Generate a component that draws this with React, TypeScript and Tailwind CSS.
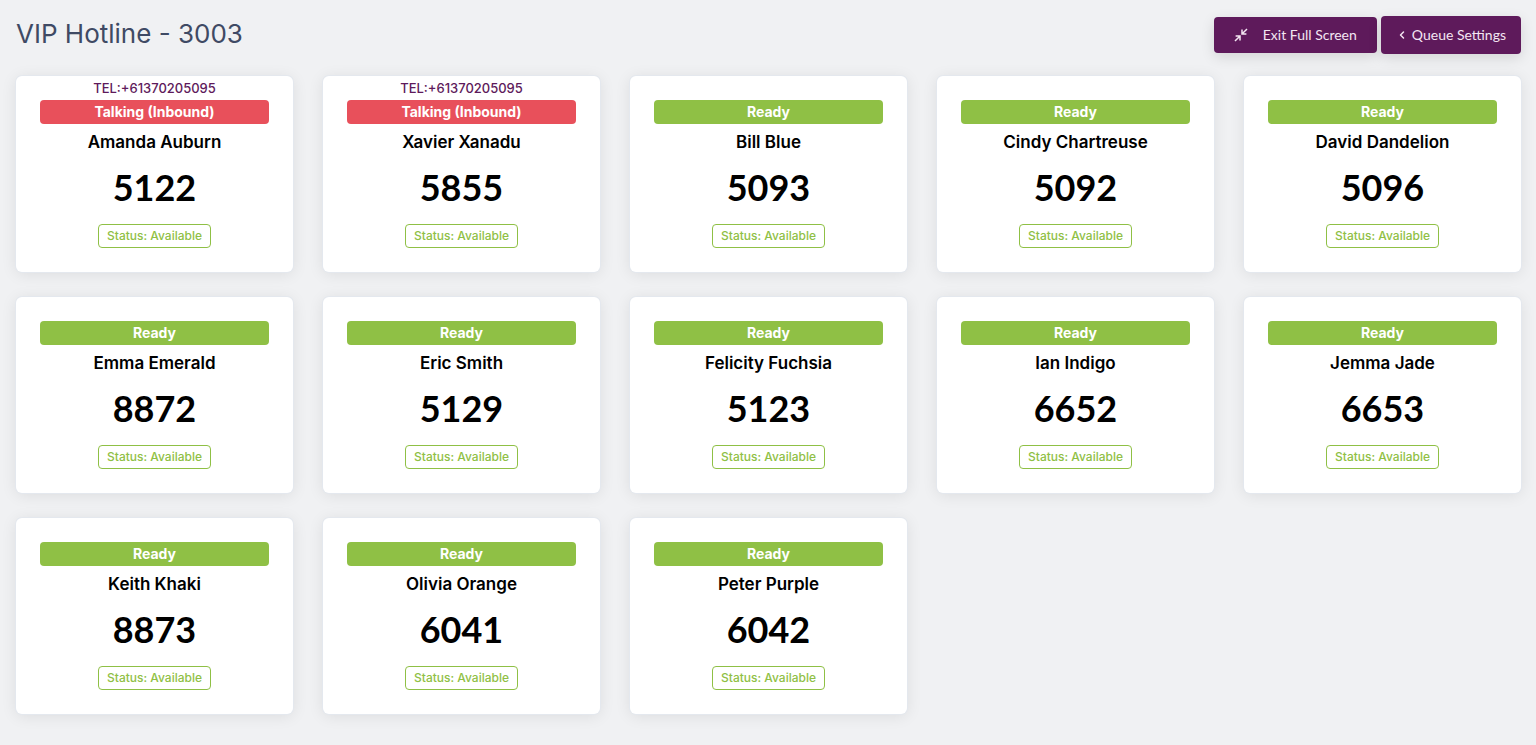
import { ChevronLeft } from 'lucide-react';

type Agent = {
  name: string;
  extension: string;
  tel?: string;
};

const agents: Agent[] = [
  { name: 'Amanda Auburn', extension: '5122', tel: '+61370205095' },
  { name: 'Xavier Xanadu', extension: '5855', tel: '+61370205095' },
  { name: 'Bill Blue', extension: '5093' },
  { name: 'Cindy Chartreuse', extension: '5092' },
  { name: 'David Dandelion', extension: '5096' },
  { name: 'Emma Emerald', extension: '8872' },
  { name: 'Eric Smith', extension: '5129' },
  { name: 'Felicity Fuchsia', extension: '5123' },
  { name: 'Ian Indigo', extension: '6652' },
  { name: 'Jemma Jade', extension: '6653' },
  { name: 'Keith Khaki', extension: '8873' },
  { name: 'Olivia Orange', extension: '6041' },
  { name: 'Peter Purple', extension: '6042' },
];

function CompressIcon() {
  return (
    <svg className="w-3.5 h-3.5" fill="none" viewBox="0 0 14 14" stroke="currentColor" strokeWidth={1.5}>
      <path d="M13 1L8.2 5.8M8 1.6V6h4.4M1 13l4.8-4.8M1.6 8H6v4.4" />
    </svg>
  );
}

function AgentCard({ agent }: { agent: Agent }) {
  return (
    <article className="flex flex-col items-center rounded-md bg-white px-6 pb-6 text-center shadow-[0_2px_16px_rgba(0,0,0,0.09)] ring-1 ring-[#e4e8ee]">
      {/* Caller line, kept empty while the agent is idle */}
      <div className="h-6 text-[13px] leading-6 font-medium text-[#5e1a5b]">
        {agent.tel && <a href={`tel:${agent.tel}`}>TEL:{agent.tel}</a>}
      </div>
      <div className={`w-full rounded text-sm leading-6 font-bold text-white ${agent.tel ? 'bg-[#e8505b]' : 'bg-[#8fc045]'}`}>
        {agent.tel ? 'Talking (Inbound)' : 'Ready'}
      </div>
      <h2 className="mt-1 text-[17px] leading-7 font-semibold text-black">{agent.name}</h2>
      <p className="mt-1 font-[Lato,sans-serif] text-4xl leading-[54px] font-bold text-black">{agent.extension}</p>
      <div className="mt-2.5 rounded border border-[#8fc045] px-2 text-xs leading-[22px] font-medium text-[#8fc045]">
        Status: Available
      </div>
    </article>
  );
}

export default function App() {
  return (
    <main className="min-h-screen bg-[#f0f1f3] pt-4 pr-[15px] pb-8 pl-4 font-[Inter,sans-serif]">
      <header className="mb-[22px] flex items-start justify-between">
        <h1 className="text-[26px] leading-9 text-[#3f4a64]">VIP Hotline - 3003</h1>
        <div className="flex items-center gap-1 font-[Lato,sans-serif] text-sm text-[#f3e6f2]">
          <button className="flex h-9 items-center gap-[15px] rounded bg-[#5e1a5b] px-5 shadow-[0_4px_14px_rgba(0,0,0,0.12)]">
            <CompressIcon />
            Exit Full Screen
          </button>
          <button className="flex h-[38px] items-center gap-1 rounded bg-[#5e1a5b] px-[15px] shadow-[0_4px_14px_rgba(0,0,0,0.12)]">
            <ChevronLeft className="w-3 h-3" strokeWidth={3} />
            Queue Settings
          </button>
        </div>
      </header>

      <section className="grid grid-cols-5 gap-x-[30px] gap-y-[25px]">
        {agents.map((agent) => (
          <AgentCard key={agent.extension} agent={agent} />
        ))}
      </section>
    </main>
  );
}
